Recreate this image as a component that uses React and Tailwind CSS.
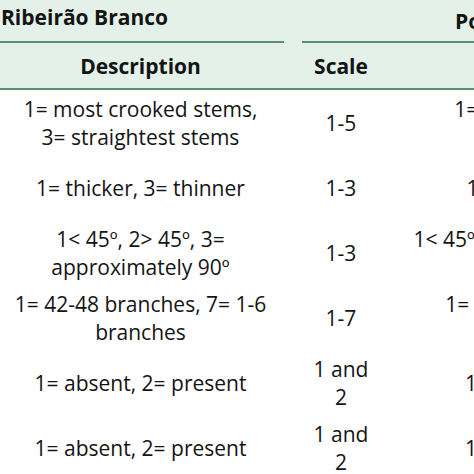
import React from "react";

const rows = [
  { d: ["1= most crooked stems,", "3= straightest stems"], s: ["1-5"], r: ["1= most crooked stems,", "3= straightest"] },
  { d: ["1= thicker, 3= thinner"], s: ["1-3"], r: ["1= thicker, 3= thinner"] },
  { d: ["1< 45º, 2> 45º, 3=", "approximately 90º"], s: ["1-3"], r: ["1< 45º, 2> 45º, 3= approximately", "90º"] },
  { d: ["1= 42-48 branches, 7= 1-6", "branches"], s: ["1-7"], r: ["1= 42-48 branches, 7= 1-6", "branches"] },
  { d: ["1= absent, 2= present"], s: ["1 and", "2"], r: ["1= absent, 2= present"] },
  { d: ["1= absent, 2= present"], s: ["1 and", "2"], r: ["1= absent, 2= present"] },
];

function Lines({ items }) {
  return items.map((t, i) => (
    <div key={i} className="whitespace-nowrap">
      {t}
    </div>
  ));
}

export default function App() {
  return (
    <div className="w-[474px] h-[474px] overflow-hidden bg-white text-[#141414] font-['Open_Sans',sans-serif]">
      <div className="w-[760px]">
        {/* header */}
        <div className="bg-[#e3f1e9]">
          <div className="flex h-[43px]">
            <div className="w-[284px] border-b-2 border-[#5a8f73] pt-[3px] pl-px text-[21px] font-bold leading-[28px]">
              Ribeirão Branco
            </div>
            <div className="w-[18px]" />
            <div className="flex-1 border-b-2 border-[#5a8f73] pt-[7px] pl-[153px] text-[21px] font-bold leading-[28px]">
              Potirendaba
            </div>
          </div>
          <div className="flex h-[47px] border-b-2 border-[#5a8f73] text-[21px] font-bold leading-[28px]">
            <div className="w-[284px] pr-[3px] flex items-center justify-center">Description</div>
            <div className="w-[114px] flex items-center justify-center">Scale</div>
            <div className="w-[346px] flex items-center justify-center">Description</div>
          </div>
        </div>

        {/* body */}
        {rows.map((row, i) => (
          <div key={i} className="flex h-[65px] text-[21px] leading-[28px] text-center">
            <div className="w-[284px] pr-[3px] flex flex-col items-center justify-center">
              <Lines items={row.d} />
            </div>
            <div className="w-[114px] flex flex-col items-center justify-center">
              <Lines items={row.s} />
            </div>
            <div className="w-[346px] flex flex-col items-center justify-center">
              <Lines items={row.r} />
            </div>
          </div>
        ))}
      </div>
    </div>
  );
}
